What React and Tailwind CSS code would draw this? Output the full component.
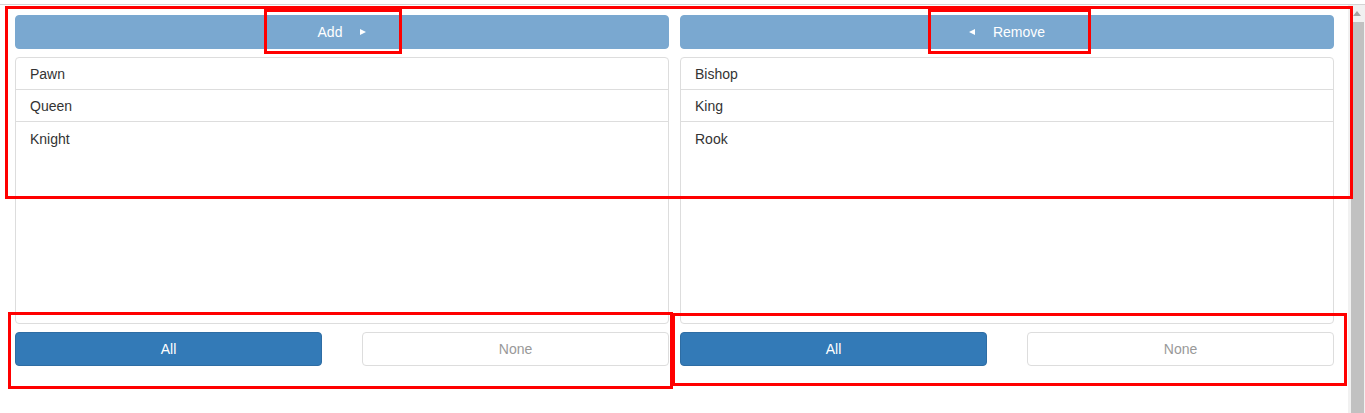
import { useState } from 'react'

const PIECES_LEFT = ['Pawn', 'Queen', 'Knight']
const PIECES_RIGHT = ['Bishop', 'King', 'Rook']

const Arrow = ({ dir }) => (
	<svg width="6" height="6" viewBox="0 0 6 6" className="shrink-0">
		{dir === 'right' ? <path d="M0 0 L6 3 L0 6 Z" fill="#fff" /> : <path d="M6 0 L0 3 L6 6 Z" fill="#fff" />}
	</svg>
)

function PieceList({ items }) {
	return (
		<div className="h-[267px] border border-[#ddd] rounded-[4px] bg-white overflow-hidden">
			{items.map((name, i) => (
				<div
					key={name}
					className={
						'h-[32px] flex items-center pt-[2px] px-[14px] text-[14px] text-[#333] ' +
						(i < items.length - 1 ? 'border-b border-[#ddd]' : '')
					}
				>
					{name}
				</div>
			))}
		</div>
	)
}

function Column({ items, action }) {
	return (
		<div className="flex flex-col">
			{/* move button, shown disabled while nothing is selected */}
			<button className="h-[34px] rounded-[4px] bg-[#7aa8d0] border border-[#7aa8d0] text-white text-[14px] flex items-center justify-center">
				{action === 'add' ? (
					<>
						<span>Add</span>
						<span className="ml-[18px]">
							<Arrow dir="right" />
						</span>
					</>
				) : (
					<>
						<span className="mr-[18px]">
							<Arrow dir="left" />
						</span>
						<span>Remove</span>
					</>
				)}
			</button>

			<div className="mt-[8px]">
				<PieceList items={items} />
			</div>

			<div className="mt-[8px] grid grid-cols-2 gap-[40px]">
				<button className="h-[34px] rounded-[4px] bg-[#337ab7] border border-[#2e6da4] text-white text-[14px]">
					All
				</button>
				<button className="h-[34px] rounded-[4px] bg-white border border-[#ddd] text-[#999] text-[14px]">
					None
				</button>
			</div>
		</div>
	)
}

export default function App() {
	const [left] = useState(PIECES_LEFT)
	const [right] = useState(PIECES_RIGHT)

	return (
		<div className="relative w-[1365px] h-[413px] bg-white overflow-hidden font-['Liberation_Sans',Arial,sans-serif]">
			<div className="h-[4px] bg-white" />
			<div className="h-[1px] bg-[#d4d4d4]" />
			<div className="flex h-[408px]">
				<div className="flex-1 pt-[10px] pl-[15px] pr-[14px]">
					<div className="grid grid-cols-2 gap-[11px]">
						<Column items={left} action="add" />
						<Column items={right} action="remove" />
					</div>
				</div>

				{/* page scrollbar */}
				<div className="w-[17px] bg-[#f1f1f1] flex flex-col items-center">
					<div className="h-[17px] flex items-center justify-center">
						<svg width="8" height="5" viewBox="0 0 8 5">
							<path d="M0 5 L4 0 L8 5 Z" fill="#a3a3a3" />
						</svg>
					</div>
					<div className="flex-1 w-[13px] ml-[2px] bg-[#c1c1c1]" />
				</div>
			</div>

			{/* review markers drawn over the controls */}
			<div className="absolute left-[5px] top-[6px] w-[1348px] h-[193px] border-[3px] border-[#ff0000] pointer-events-none" />
			<div className="absolute left-[264px] top-[9px] w-[138px] h-[45px] border-[3px] border-[#ff0000] pointer-events-none" />
			<div className="absolute left-[928px] top-[9px] w-[163px] h-[45px] border-[3px] border-[#ff0000] pointer-events-none" />
			<div className="absolute left-[8px] top-[312px] w-[665px] h-[77px] border-[3px] border-[#ff0000] pointer-events-none" />
			<div className="absolute left-[672px] top-[313px] w-[675px] h-[73px] border-[3px] border-[#ff0000] pointer-events-none" />
		</div>
	)
}
